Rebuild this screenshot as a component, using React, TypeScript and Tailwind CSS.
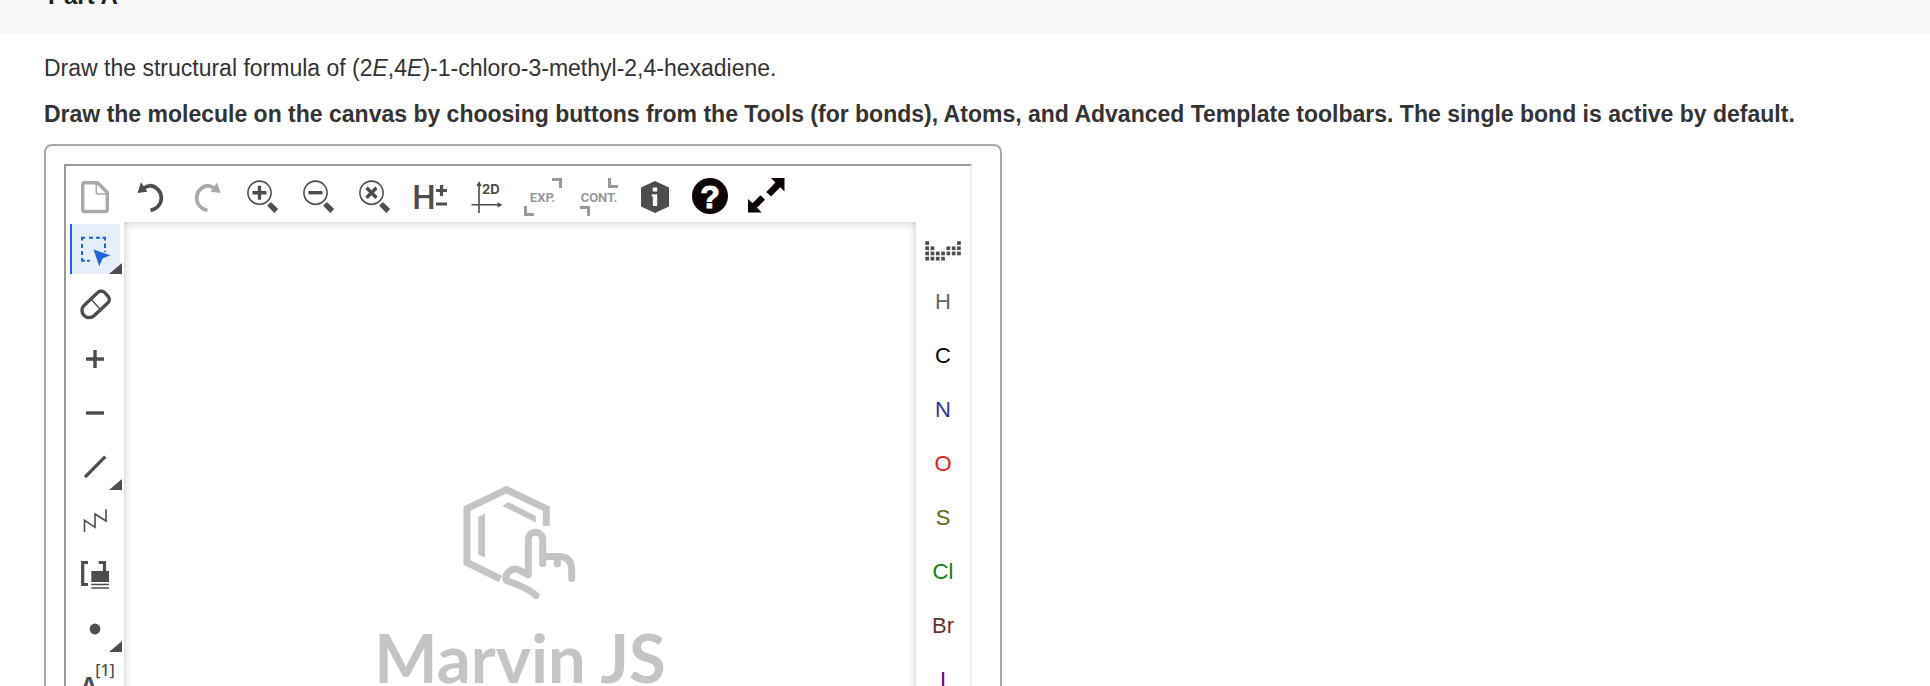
import React from "react";
import clsx from "clsx";

interface Tool {
  label: string;
  icon: React.ReactNode;
  menu?: boolean;
  active?: boolean;
}

interface Atom {
  symbol: string;
  name: string;
  color: string;
}

const DARK = "#4d4d4d";
const LIGHT = "#a9a9a9";
const MUTED = "#96999c";

const UndoShape = () => (
  <>
    <path
      d="M17.5 16.5A12.4 12.4 0 0 1 24.5 13.6A12.4 12.4 0 0 1 24.5 38.2"
      fill="none"
      stroke="currentColor"
      strokeWidth="3.6"
    />
    <path d="M15 10.2L21.4 19.7L11.5 20.9Z" fill="currentColor" />
  </>
);

const Magnifier: React.FC<{ children: React.ReactNode }> = ({ children }) => (
  <g stroke={DARK} fill="none">
    <circle cx="21.5" cy="20.7" r="11.6" strokeWidth="1.6" />
    <path d="M31 31.8L38.3 39" strokeWidth="5.4" />
    <g strokeWidth="3.4">{children}</g>
  </g>
);

const toolbar: Tool[] = [
  {
    label: "New",
    icon: (
      <g fill="none" stroke={LIGHT} strokeLinejoin="round">
        <path
          d="M14.5 10.7H27.5L37.3 20.5V37.5A2 2 0 0 1 35.3 39.5H14.7A2 2 0 0 1 12.7 37.5V12.7A2 2 0 0 1 14.5 10.7Z"
          strokeWidth="3.4"
        />
        <path d="M26.3 11V20A2 2 0 0 0 28.3 22H37" strokeWidth="1.6" />
      </g>
    ),
  },
  {
    label: "Undo",
    icon: (
      <g color={DARK}>
        <UndoShape />
      </g>
    ),
  },
  {
    label: "Redo",
    icon: (
      <g color={LIGHT} transform="matrix(-1 0 0 1 50 0)">
        <UndoShape />
      </g>
    ),
  },
  {
    label: "Zoom in",
    icon: (
      <Magnifier>
        <path d="M14.5 20.7H28.5M21.5 13.7V27.7" />
      </Magnifier>
    ),
  },
  {
    label: "Zoom out",
    icon: (
      <Magnifier>
        <path d="M14.5 20.7H28.5" />
      </Magnifier>
    ),
  },
  {
    label: "Zoom reset",
    icon: (
      <Magnifier>
        <path d="M16.5 15.7L26.5 25.7M26.5 15.7L16.5 25.7" />
      </Magnifier>
    ),
  },
  {
    label: "Explicit hydrogens",
    icon: (
      <>
        <text
          x="18"
          y="37"
          textAnchor="middle"
          fill={DARK}
          className="font-['Roboto',sans-serif] text-[33px] font-medium"
        >
          H
        </text>
        <path
          d="M30 18.5H41M35.5 13V24M30 32H41"
          stroke={DARK}
          strokeWidth="3.2"
        />
      </>
    ),
  },
  {
    label: "Clean in 2D",
    icon: (
      <>
        <path d="M17 12V41M9.5 32.8H38" stroke={DARK} strokeWidth="1.6" />
        <path d="M17 9L19.6 14H14.4ZM40.5 32.8L35.5 35.4V30.2Z" fill={DARK} />
        <text
          x="20"
          y="22"
          fill={DARK}
          className="font-['Inter',sans-serif] text-[13px] font-bold"
        >
          2D
        </text>
      </>
    ),
  },
  {
    label: "Expand",
    icon: (
      <>
        <path
          d="M34 7.5H42.5V16M7.5 34V42.5H16"
          fill="none"
          stroke={MUTED}
          strokeWidth="3"
        />
        <text
          x="24.5"
          y="30"
          textAnchor="middle"
          fill={MUTED}
          className="font-['Roboto',sans-serif] text-[13px] font-bold"
        >
          EXP.
        </text>
      </>
    ),
  },
  {
    label: "Contract",
    icon: (
      <>
        <path
          d="M35.5 6V14.5H44M6 35.5H14.5V44"
          fill="none"
          stroke={MUTED}
          strokeWidth="3"
        />
        <text
          x="25"
          y="30"
          textAnchor="middle"
          fill={MUTED}
          className="font-['Roboto',sans-serif] text-[13px] font-bold"
        >
          CONT.
        </text>
      </>
    ),
  },
  {
    label: "About",
    icon: (
      <>
        <path d="M25 9L39 15.5V34.5L25 41L11 34.5V15.5Z" fill={DARK} />
        <path
          d="M22.8 15.6H27.2V19.6H22.8ZM21.8 22.3H27.2V34H22.8V24.5H21.8Z"
          fill="#fff"
        />
      </>
    ),
  },
  {
    label: "Help",
    icon: (
      <>
        <circle cx="24" cy="24" r="18" fill="#0d0505" />
        <text
          x="24"
          y="36"
          textAnchor="middle"
          fill="#fff"
          stroke="#fff"
          className="font-['Liberation_Sans',sans-serif] text-[32px] font-bold"
        >
          ?
        </text>
      </>
    ),
  },
  {
    label: "Full screen",
    icon: (
      <g fill="#0d0505">
        <path d="M29 6H42.5V19.5L38.3 15.3L29 24.6L24.3 19.9L33.4 10.4Z" />
        <path d="M6 27L10.4 31.2L18.4 23.2L23 27.8L15 35.8L19.6 40.4H6Z" />
      </g>
    ),
  },
];

const tools: Tool[] = [
  {
    label: "Selection",
    active: true,
    menu: true,
    icon: (
      <>
        <path
          d="M12 16.5V13.8H15M19 13.8H23M26 13.8H30M32.5 13.8H35V16.5M35 19.5V24M35 27V28M12 20V24M12 27V31M12 34V36.7H15M17 36.7H20"
          fill="none"
          stroke="#1f63e0"
          strokeWidth="2"
        />
        <path d="M23.5 25.5L40.3 31.2L32.5 34.4L29.3 42.2Z" fill="#1f63e0" />
      </>
    ),
  },
  {
    label: "Eraser",
    icon: (
      <g
        transform="translate(25 27) rotate(-43)"
        fill="none"
        stroke={DARK}
      >
        <path
          d="M-8 -7.2H11A4.5 4.5 0 0 1 15.5 -2.7V2.7A4.5 4.5 0 0 1 11 7.2H-8A7.2 7.2 0 0 1 -8 -7.2Z"
          strokeWidth="3.3"
        />
        <path d="M1 -7V7" strokeWidth="1.3" />
      </g>
    ),
  },
  {
    label: "Increase charge",
    icon: <path d="M16 27H34M25 18V36" stroke={DARK} strokeWidth="3.4" />,
  },
  {
    label: "Decrease charge",
    icon: <path d="M16 27H34" stroke={DARK} strokeWidth="3.4" />,
  },
  {
    label: "Single bond",
    menu: true,
    icon: <path d="M15 37.2L35.3 16.7" stroke={DARK} strokeWidth="3.2" />,
  },
  {
    label: "Chain",
    icon: (
      <path
        d="M14.5 38V26.3L25 33.3V20L36 27V15.3"
        fill="none"
        stroke={DARK}
        strokeWidth="1.6"
      />
    ),
  },
  {
    label: "Group",
    icon: (
      <>
        <path
          d="M18 14.5H12.7V36.5H18M28.7 14.5H34.5V24"
          fill="none"
          stroke={DARK}
          strokeWidth="3.2"
        />
        <path d="M21.3 23H39V34H21.3Z" fill={DARK} />
        <path d="M21.3 36.5H39M21.3 40H39" stroke={DARK} strokeWidth="1.6" />
      </>
    ),
  },
  {
    label: "Radical",
    menu: true,
    icon: <circle cx="25" cy="27" r="5.4" fill={DARK} />,
  },
  {
    label: "Atom map",
    icon: (
      <g fill={DARK}>
        <text
          x="19"
          y="37"
          textAnchor="middle"
          className="font-['Inter',sans-serif] text-[22px] font-bold"
        >
          A
        </text>
        <text
          x="35"
          y="20"
          textAnchor="middle"
          className="font-['Noto_Sans',sans-serif] text-[16px] font-medium"
        >
          [1]
        </text>
      </g>
    ),
  },
];

const atoms: Atom[] = [
  { symbol: "H", name: "Hydrogen", color: "text-[#666666]" },
  { symbol: "C", name: "Carbon", color: "text-black" },
  { symbol: "N", name: "Nitrogen", color: "text-[#333399]" },
  { symbol: "O", name: "Oxygen", color: "text-[#eb1717]" },
  { symbol: "S", name: "Sulfur", color: "text-[#666611]" },
  { symbol: "Cl", name: "Chlorine", color: "text-[#118011]" },
  { symbol: "Br", name: "Bromine", color: "text-[#663333]" },
  { symbol: "I", name: "Iodine", color: "text-[#660099]" },
];

const periodicRows = [[0, 6], [0, 1, 4, 5, 6], [0, 1, 2, 3, 4, 5, 6], [0, 1, 2, 3]];

const ToolButton: React.FC<{ tool: Tool }> = ({ tool }) => (
  <button
    type="button"
    aria-label={tool.label}
    className={clsx(
      "size-[50px] shrink-0",
      tool.active && "bg-[#e6edfb] shadow-[inset_2px_0_0_#1f63e0]"
    )}
  >
    <svg viewBox="0 0 50 50" className="size-[50px] overflow-visible">
      {tool.icon}
      {tool.menu && <path d="M39 50L52 39V50Z" fill={DARK} />}
    </svg>
  </button>
);

const MarvinLogo = () => (
  <svg
    viewBox="0 0 114 116"
    className="h-[116px] w-[114px]"
    fill="none"
    stroke="#c4c4c4"
    strokeWidth="7"
    aria-hidden="true"
  >
    <path d="M83.3 41V23.6L43.5 4.6L4 23.6V77.5L37.5 94" />
    <path
      d="M15.3 32L22 28.5V72.5L15.3 69.5ZM39.3 21L45.3 17L72.8 31V37.5Z"
      fill="#c4c4c4"
      stroke="none"
    />
    <path
      d="M73 110.5Q65.5 103 44.5 96Q41 94 44.5 88Q49.5 82.5 55 84.5L65.3 89.8V54.5A7.2 7.2 0 0 1 79.700 54.5V78.5V71.5H97Q108.5 72.5 108.700 84V93.5M94.3 73V79"
      strokeLinecap="round"
      strokeLinejoin="round"
    />
  </svg>
);

const Editor = () => (
  <div className="flex flex-1 flex-col border-2 border-t-[#999999] border-r-[#eeeeee] border-b-[#eeeeee] border-l-[#999999]">
    <div role="toolbar" className="flex gap-1.5 pt-1.5 pl-1">
      {toolbar.map((tool) => (
        <ToolButton key={tool.label} tool={tool} />
      ))}
    </div>
    <div className="flex flex-1">
      <div className="flex w-[58px] flex-col gap-1 pt-0.5 pl-1">
        {tools.map((tool) => (
          <ToolButton key={tool.label} tool={tool} />
        ))}
      </div>
      <div className="flex flex-1 flex-col items-center bg-white pt-[263px] shadow-[inset_0_0_10px_#c4c4c4]">
        <MarvinLogo />
        <div className="mt-4 font-['Lato',sans-serif] text-[67px] leading-[80px] font-bold text-[#c4c4c4]">
          Marvin JS
        </div>
      </div>
      <div className="flex w-[54px] flex-col pt-0.5">
        <button
          type="button"
          aria-label="Periodic table"
          className="h-[54px] w-[54px]"
        >
          <svg viewBox="0 0 54 54" className="size-[54px]" fill={DARK}>
            {periodicRows.map((cols, row) =>
              cols.map((col) => (
                <rect
                  key={`${row}-${col}`}
                  x={9.3 + col * 5.3}
                  y={17.2 + row * 5.2}
                  width="3.7"
                  height="3.7"
                />
              ))
            )}
          </svg>
        </button>
        {atoms.map((atom) => (
          <button
            key={atom.symbol}
            type="button"
            aria-label={atom.name}
            className={clsx(
              "h-[54px] w-[54px] pb-1.5 text-[22px] leading-6",
              atom.color
            )}
          >
            {atom.symbol}
          </button>
        ))}
      </div>
    </div>
  </div>
);

export default function App() {
  return (
    <div className="h-screen overflow-hidden bg-white font-['Liberation_Sans',Arial,sans-serif] text-[#333333]">
      <header className="-mt-4 bg-[#f9f9f9] px-12 pb-[26px]">
        <h2 className="text-2xl leading-6 font-bold text-[#222222]">Part A</h2>
      </header>
      <main className="px-11 pt-5">
        <p className="text-[23px] leading-7">
          Draw the structural formula of (2<em>E</em>,4<em>E</em>
          )-1-chloro-3-methyl-2,4-hexadiene.
        </p>
        <p className="mt-[18px] text-[23px] leading-7 font-bold">
          Draw the molecule on the canvas by choosing buttons from the Tools (for
          bonds), Atoms, and Advanced Template toolbars. The single bond is
          active by default.
        </p>
        <section className="mt-4 flex max-w-[958px] rounded-lg border-2 border-[#a9a9a9] py-[18px] pr-7 pl-[18px]">
          <Editor />
        </section>
      </main>
    </div>
  );
}
